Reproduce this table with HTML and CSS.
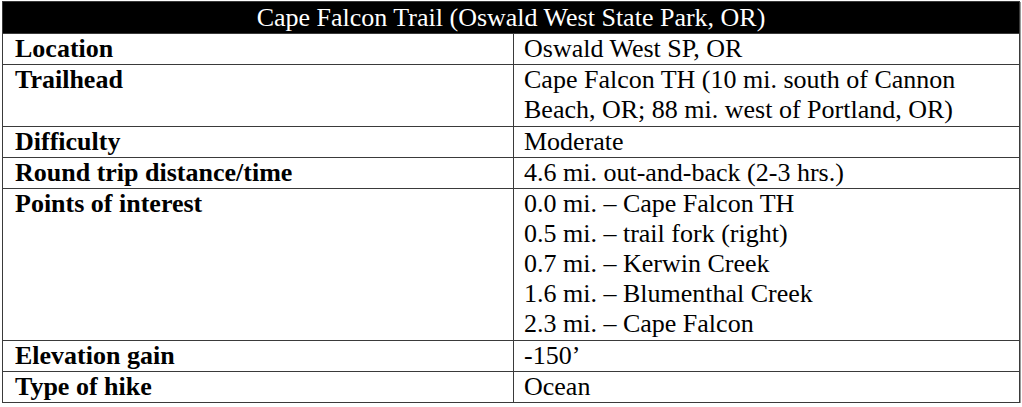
FILE: index.html
```html
<!DOCTYPE html>
<html>
<head>
<meta charset="utf-8">
<link rel="stylesheet" href="styles.css">
</head>
<body>
<div class="trail">
  <div class="title">Cape Falcon Trail (Oswald West State Park, OR)</div>
  <div class="row">
    <div class="label">Location</div>
    <div class="val">Oswald West SP, OR</div>
  </div>
  <div class="row">
    <div class="label">Trailhead</div>
    <div class="val multi">Cape Falcon TH (10 mi. south of Cannon<br>Beach, OR; 88 mi. west of Portland, OR)</div>
  </div>
  <div class="row">
    <div class="label">Difficulty</div>
    <div class="val">Moderate</div>
  </div>
  <div class="row">
    <div class="label">Round trip distance/time</div>
    <div class="val">4.6 mi. out-and-back (2-3 hrs.)</div>
  </div>
  <div class="row">
    <div class="label">Points of interest</div>
    <div class="val multi">0.0 mi. – Cape Falcon TH<br>0.5 mi. – trail fork (right)<br>0.7 mi. – Kerwin Creek<br>1.6 mi. – Blumenthal Creek<br>2.3 mi. – Cape Falcon</div>
  </div>
  <div class="row">
    <div class="label">Elevation gain</div>
    <div class="val">-150’</div>
  </div>
  <div class="row last">
    <div class="label">Type of hike</div>
    <div class="val">Ocean</div>
  </div>
</div>
</body>
</html>
```

FILE: styles.css
```css
body {
  margin: 0;
  padding: 1px 2px 0 2px;
  background: #fff;
}
.trail {
  width: 1018px;
  box-sizing: border-box;
  border: 1px solid #3a3a3a;
  box-shadow: 1px 1px 0 #9a9a9a;
  font-family: "Liberation Serif", serif !important;
  font-size: 26px;
  line-height: 30px;
  color: #000;
}
.title {
  font-family: "Liberation Serif", serif !important;
  background: #000;
  color: #fff;
  text-align: center;
  height: 31px;
  line-height: 31px;
  border-bottom: 1px solid #3a3a3a;
}
.row {
  display: grid;
  grid-template-columns: 511px 1fr;
  border-bottom: 1px solid #3a3a3a;
}
.row.last {
  border-bottom: none;
}
.label {
  font-family: "Liberation Serif", serif !important;
  font-weight: bold;
  padding-left: 12px;
  border-right: 1px solid #3a3a3a;
}
.val {
  font-family: "Liberation Serif", serif !important;
  padding-left: 10px;
}
.val.multi {
  padding-bottom: 1px;
}
```
